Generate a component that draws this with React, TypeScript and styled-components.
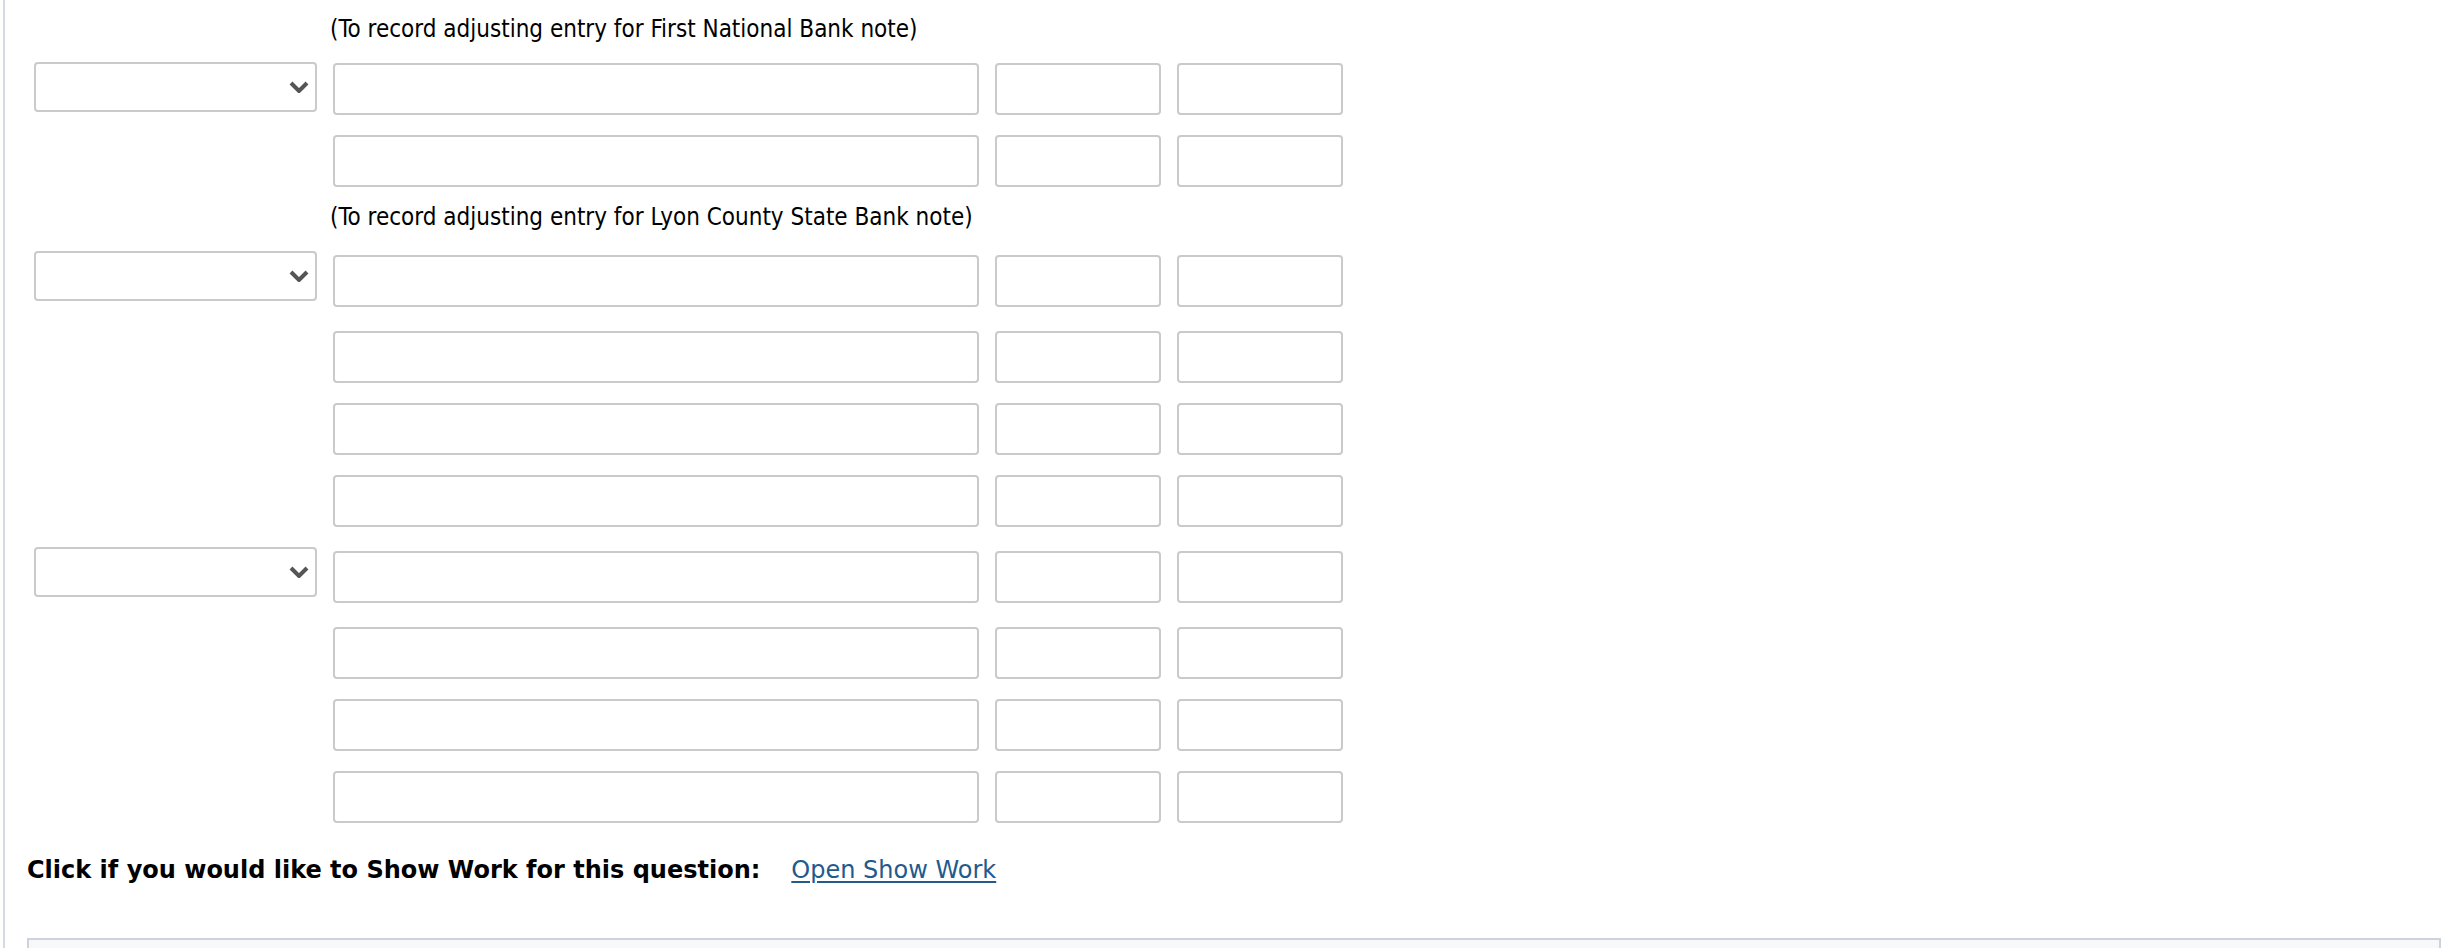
import React from "react";
import styled, { createGlobalStyle } from "styled-components";

const GlobalStyle = createGlobalStyle`
  html, body {
    margin: 0;
    padding: 0;
    background: #ffffff;
  }
  body {
    font-family: "DejaVu Sans", Verdana, sans-serif;
    color: #000;
  }
`;

const Page = styled.main`
  margin-left: 3px;
  min-height: 100vh;
  border-left: 2px solid #d4dae5;
  padding: 16px 0 0 22px;
  box-sizing: border-box;
`;

const Section = styled.section<{ $top?: number }>`
  display: flex;
  flex-direction: column;
  gap: 20px;
  margin-top: ${(p) => p.$top ?? 0}px;
  padding-left: 7px;
`;

const Note = styled.div`
  font-family: "DejaVu Sans Condensed", "DejaVu Sans", Tahoma, sans-serif;
  font-size: 24px;
  line-height: 26px;
  padding-left: 296px;
  margin-bottom: 1px;
  white-space: nowrap;
`;

const EntryRow = styled.div<{ $pad?: number }>`
  display: grid;
  grid-template-columns: 283px 646px 166px 166px;
  column-gap: 16px;
  align-items: start;
  padding: ${(p) => p.$pad ?? 0}px 0;
`;

const SelectWrap = styled.div<{ $shift?: number }>`
  position: relative;
  height: 50px;
  margin-top: ${(p) => p.$shift ?? 0}px;
`;

const AccountSelect = styled.select`
  appearance: none;
  -webkit-appearance: none;
  width: 100%;
  height: 100%;
  box-sizing: border-box;
  border: 2px solid #cacaca;
  border-radius: 4px;
  background: #fff;
  font-family: "DejaVu Sans", sans-serif;
  font-size: 20px;
  outline: none;
`;

const Chevron = styled.svg`
  position: absolute;
  right: 8px;
  top: 50%;
  width: 20px;
  height: 12px;
  margin-top: -6px;
  pointer-events: none;
`;

const Field = styled.input`
  display: block;
  width: 100%;
  height: 52px;
  box-sizing: border-box;
  border: 2px solid #cacaca;
  border-radius: 4px;
  background: #fff;
  font-family: "DejaVu Sans", sans-serif;
  font-size: 20px;
  padding: 0 10px;
  outline: none;
`;

const Spacer = styled.div``;

const ShowWork = styled.div`
  margin-top: 34px;
  font-size: 24px;
  line-height: 26px;
  white-space: nowrap;
`;

const ShowWorkLabel = styled.b`
  font-weight: bold;
  margin-right: 31px;
`;

const ShowWorkLink = styled.a`
  color: #235a8c;
  text-decoration: underline;
  text-decoration-thickness: 2px;
  text-underline-offset: 3px;
  cursor: pointer;
`;

const Panel = styled.div`
  margin-top: 55px;
  width: 2414px;
  height: 80px;
  box-sizing: border-box;
  border: 2px solid #cdd3dd;
  background: #f6f8fa;
`;

type RowSpec = { select?: boolean; pad?: number; shift?: number };

function Row({ select, pad, shift }: RowSpec) {
  return (
    <EntryRow $pad={pad}>
      {select ? (
        <SelectWrap $shift={shift}>
          <AccountSelect defaultValue="">
            <option value=""></option>
          </AccountSelect>
          <Chevron viewBox="0 0 20 12">
            <path d="M2 2 L10 10 L18 2" fill="none" stroke="#555" strokeWidth="4" strokeLinecap="butt" />
          </Chevron>
        </SelectWrap>
      ) : (
        <Spacer />
      )}
      <Field />
      <Field />
      <Field />
    </EntryRow>
  );
}

const first: RowSpec[] = [{ select: true, shift: -1 }, {}];
const second: RowSpec[] = [
  { select: true, pad: 4, shift: -4 },
  {},
  {},
  {},
  { select: true, pad: 4, shift: -4 },
  {},
  {},
  {},
];

export default function App() {
  return (
    <>
      <GlobalStyle />
      <Page>
        <Section>
          <Note>(To record adjusting entry for First National Bank note)</Note>
          {first.map((r, i) => (
            <Row key={i} {...r} />
          ))}
        </Section>
        <Section $top={17}>
          <Note>(To record adjusting entry for Lyon County State Bank note)</Note>
          {second.map((r, i) => (
            <Row key={i} {...r} />
          ))}
        </Section>
        <ShowWork>
          <ShowWorkLabel>Click if you would like to Show Work for this question:</ShowWorkLabel>
          <ShowWorkLink>Open Show Work</ShowWorkLink>
        </ShowWork>
        <Panel />
      </Page>
    </>
  );
}
